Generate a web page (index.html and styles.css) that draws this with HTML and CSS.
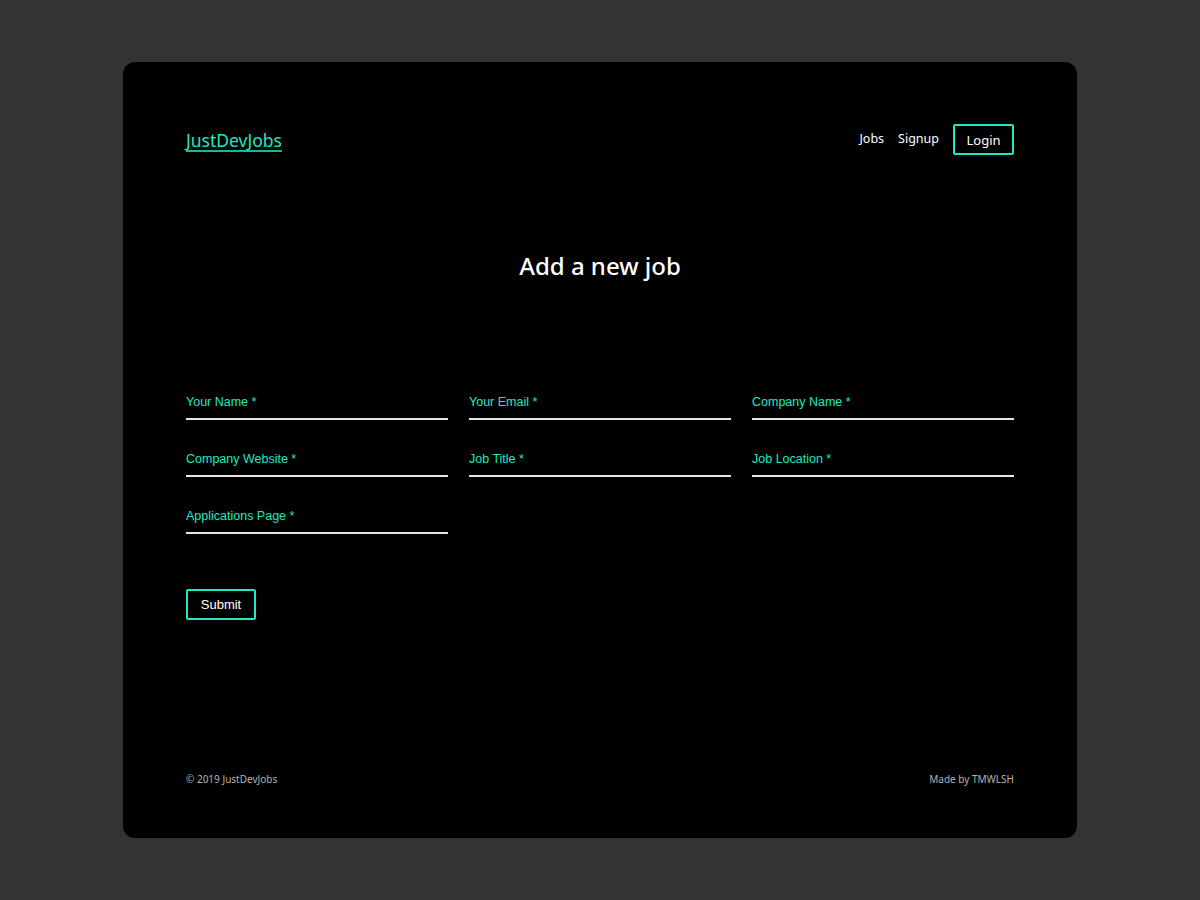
FILE: index.html
```html
<!DOCTYPE html>
<html lang="en">
<head>
<meta charset="utf-8">
<title>JustDevJobs - Add a new job</title>
<link rel="stylesheet" href="styles.css">
</head>
<body>
<div class="card">
  <header class="header">
    <a class="logo" href="#">JustDevJobs</a>
    <nav class="nav">
      <a class="nav-link" href="#">Jobs</a>
      <a class="nav-link" href="#">Signup</a>
      <a class="nav-btn" href="#">Login</a>
    </nav>
  </header>
  <main class="main">
    <h1 class="title">Add a new job</h1>
    <form class="form">
      <div class="grid">
        <label class="field"><span class="label">Your Name *</span></label>
        <label class="field"><span class="label">Your Email *</span></label>
        <label class="field"><span class="label">Company Name *</span></label>
        <label class="field"><span class="label">Company Website *</span></label>
        <label class="field"><span class="label">Job Title *</span></label>
        <label class="field"><span class="label">Job Location *</span></label>
        <label class="field"><span class="label">Applications Page *</span></label>
      </div>
      <button class="submit" type="button">Submit</button>
    </form>
  </main>
  <footer class="footer">
    <span>© 2019 JustDevJobs</span>
    <span>Made by TMWLSH</span>
  </footer>
</div>
</body>
</html>
```
FILE: styles.css
```css
* { box-sizing: border-box; }
html, body { margin: 0; padding: 0; }
body {
  background: #333333;
  font-family: "Noto Sans", "Open Sans", sans-serif;
  color: #fff;
}
.card {
  width: 954px;
  height: 776px;
  margin: 62px auto 0;
  background: #000;
  border-radius: 12px;
  padding: 62px 63px 52px;
  display: flex;
  flex-direction: column;
}
.header {
  display: flex;
  justify-content: space-between;
  align-items: center;
  height: 31px;
}
.logo {
  color: #1de9c3;
  font-size: 17.5px;
  text-decoration: none;
  border-bottom: 2px solid #14b89a;
  line-height: 20px;
  padding-bottom: 0;
  margin-top: 3px;
}
.nav {
  display: flex;
  align-items: center;
}
.nav-link {
  color: #fff;
  text-decoration: none;
  font-size: 12.5px;
  margin-right: 14px;
  margin-top: -3px;
}
.nav-btn {
  color: #fff;
  text-decoration: none;
  font-size: 13px;
  border: 2px solid #1de9c3;
  border-radius: 2px;
  width: 61px;
  height: 31px;
  display: flex;
  align-items: center;
  justify-content: center;
}
.main { flex: 1; }
.title {
  margin: 94px 0 0;
  text-align: center;
  font-size: 24px;
  font-weight: 500;
  line-height: 34px;
}
.form { margin-top: 101px; }
.grid {
  display: grid;
  grid-template-columns: repeat(3, 1fr);
  column-gap: 21px;
  row-gap: 21px;
}
.field {
  display: flex;
  align-items: center;
  height: 36px;
  border-bottom: 2px solid #e6e6e6;
}
.label {
  font-family: "Liberation Sans", Arial, sans-serif;
  color: #1de9c3;
  font-size: 12.5px;
  margin-top: 2px;
}
.submit {
  margin-top: 55px;
  width: 70px;
  height: 31px;
  background: #000;
  color: #fff;
  border: 2px solid #1de9c3;
  border-radius: 2px;
  font-family: "Liberation Sans", Arial, sans-serif;
  font-size: 13px;
  padding: 0;
}
.footer {
  display: flex;
  justify-content: space-between;
  font-size: 10px;
  color: #b3b3b3;
  margin-top: 2px;
}
```
